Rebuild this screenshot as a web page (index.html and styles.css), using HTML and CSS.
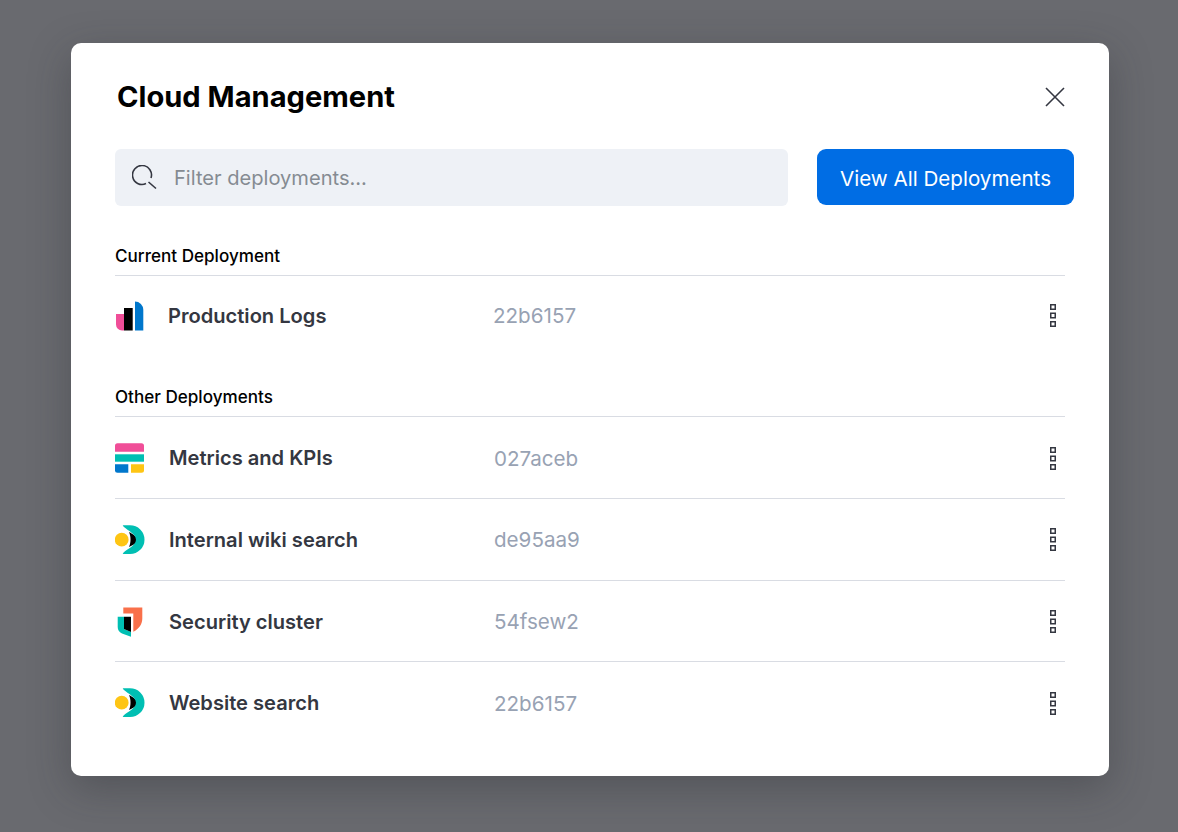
FILE: index.html

```html
<!DOCTYPE html>
<html lang="en">
<head>
    <meta charset="UTF-8">
    <title>Cloud Management</title>
    <link rel="stylesheet" href="styles.css">
</head>
<body>

<div class="modal">

    <!-- Header -->
    <div class="modal-header">
        <h1>Cloud Management</h1>
        <svg class="close-icon" width="22" height="22" viewBox="0 0 22 22">
            <path d="M2 2 L20 20 M20 2 L2 20" stroke="#343741" stroke-width="1.6" fill="none"/>
        </svg>
    </div>

    <!-- Search -->
    <div class="toolbar">
        <div class="search-box">
            <svg class="search-icon" width="26" height="26" viewBox="0 0 26 26">
                <path d="M14 18.600 A9.500 9.500 0 1 1 19 13" stroke="#343741" stroke-width="1.600" fill="none"/>
                <path d="M16.500 17 L24 23.500" stroke="#343741" stroke-width="1.600" fill="none"/>
            </svg>
            <span class="search-placeholder">Filter deployments...</span>
        </div>
        <button class="view-all">View All Deployments</button>
    </div>

    <!-- Current -->
    <div class="section-title">Current Deployment</div>
    <div class="row row-current">
        <svg class="app-icon" width="30" height="30" viewBox="0 0 30 30">
            <path d="M1 13 H9 V29.500 H7 A6 6 0 0 1 1 23.500 Z" fill="#f04e98"/>
            <rect x="9" y="7" width="8.700" height="22.500" fill="#000"/>
            <path d="M20 0.500 A8.300 8.300 0 0 1 28.300 8.800 V29.500 H20 Z" fill="#0077cc"/>
        </svg>
        <span class="row-name">Production Logs</span>
        <span class="row-id">22b6157</span>
        <svg class="more-icon" width="6" height="23" viewBox="0 0 6 23">
            <path d="M0.750 0.750 H5.250 V5.250 H0.750 Z M0.750 9.250 H5.250 V13.750 H0.750 Z M0.750 17.750 H5.250 V22.250 H0.750 Z" fill="none" stroke="#343741" stroke-width="1.500"/>
        </svg>
    </div>

    <!-- Other -->
    <div class="section-title section-other">Other Deployments</div>
    <div class="row">
        <svg class="app-icon" width="30" height="30" viewBox="0 0 30 30">
            <path d="M2.500 0.300 H26.500 A2.500 2.500 0 0 1 29 2.800 V8.700 H0 V2.800 A2.500 2.500 0 0 1 2.500 0.300 Z" fill="#f04e98"/>
            <rect x="0" y="11.300" width="29" height="7.400" fill="#00bfb3"/>
            <path d="M0 21.300 H13.300 V29.700 H2.500 A2.500 2.500 0 0 1 0 27.200 Z" fill="#0077cc"/>
            <path d="M16 21.300 H29 V27.200 A2.500 2.500 0 0 1 26.500 29.700 H16 Z" fill="#fec514"/>
        </svg>
        <span class="row-name">Metrics and KPIs</span>
        <span class="row-id">027aceb</span>
        <svg class="more-icon" width="6" height="23" viewBox="0 0 6 23">
            <path d="M0.750 0.750 H5.250 V5.250 H0.750 Z M0.750 9.250 H5.250 V13.750 H0.750 Z M0.750 17.750 H5.250 V22.250 H0.750 Z" fill="none" stroke="#343741" stroke-width="1.500"/>
        </svg>
    </div>
    <div class="row">
        <svg class="app-icon" width="30" height="30" viewBox="0 0 30 30">
            <path d="M14 7 C18 9 22 12 22 14.700 C22 18 18 20 14 22 C16 18 16 11 14 7 Z" fill="#000"/>
            <path d="M7.700 0.300 H15 A14.500 14.350 0 0 1 15 29 H7.700 C9 25 21 21.500 21 14.700 C21 8 9 4 7.700 0.300 Z" fill="#00bfb3"/>
            <circle cx="6.700" cy="14.700" r="6.900" fill="#fec514"/>
        </svg>
        <span class="row-name">Internal wiki search</span>
        <span class="row-id">de95aa9</span>
        <svg class="more-icon" width="6" height="23" viewBox="0 0 6 23">
            <path d="M0.750 0.750 H5.250 V5.250 H0.750 Z M0.750 9.250 H5.250 V13.750 H0.750 Z M0.750 17.750 H5.250 V22.250 H0.750 Z" fill="none" stroke="#343741" stroke-width="1.500"/>
        </svg>
    </div>
    <div class="row">
        <svg class="app-icon" width="30" height="30" viewBox="0 0 30 30">
            <path d="M8.300 0.500 H27.300 V11.500 C27.300 17 24 22 18.300 24.800 V6.500 H8.300 Z" fill="#f9704a"/>
            <path d="M2.700 9.800 H9 V22 L16 25 V29.800 L7 26.500 C4 25 2.700 23 2.700 20 Z" fill="#00bfb3"/>
            <path d="M9 9.800 H16 V25 L9 22 Z" fill="#000"/>
        </svg>
        <span class="row-name">Security cluster</span>
        <span class="row-id">54fsew2</span>
        <svg class="more-icon" width="6" height="23" viewBox="0 0 6 23">
            <path d="M0.750 0.750 H5.250 V5.250 H0.750 Z M0.750 9.250 H5.250 V13.750 H0.750 Z M0.750 17.750 H5.250 V22.250 H0.750 Z" fill="none" stroke="#343741" stroke-width="1.500"/>
        </svg>
    </div>
    <div class="row">
        <svg class="app-icon" width="30" height="30" viewBox="0 0 30 30">
            <path d="M14 7 C18 9 22 12 22 14.700 C22 18 18 20 14 22 C16 18 16 11 14 7 Z" fill="#000"/>
            <path d="M7.700 0.300 H15 A14.500 14.350 0 0 1 15 29 H7.700 C9 25 21 21.500 21 14.700 C21 8 9 4 7.700 0.300 Z" fill="#00bfb3"/>
            <circle cx="6.700" cy="14.700" r="6.900" fill="#fec514"/>
        </svg>
        <span class="row-name">Website search</span>
        <span class="row-id">22b6157</span>
        <svg class="more-icon" width="6" height="23" viewBox="0 0 6 23">
            <path d="M0.750 0.750 H5.250 V5.250 H0.750 Z M0.750 9.250 H5.250 V13.750 H0.750 Z M0.750 17.750 H5.250 V22.250 H0.750 Z" fill="none" stroke="#343741" stroke-width="1.500"/>
        </svg>
    </div>

</div>

</body>
</html>
```

FILE: styles.css

```css
html, body {
    height: 100%;
}
body {
    margin: 0;
    padding: 43px 69px 56px 71px;
    box-sizing: border-box;
    background-color: #696a6f;
    font-family: Inter, "Liberation Sans", sans-serif;
    overflow: hidden;
}
.modal {
    width: 1038px;
    height: 733px;
    box-sizing: border-box;
    padding: 0 44px;
    background: white;
    border-radius: 10px;
    box-shadow: 0 12px 40px rgba(40, 42, 50, 0.35);
}
.modal-header {
    display: flex;
    justify-content: space-between;
    align-items: center;
    height: 106px;
}
.modal-header h1 {
    margin: 0 0 0 2px;
    font-size: 29.100px;
    font-weight: 700;
    color: #000;
}
.close-icon {
    margin: 2px -1px 0 0;
}
.toolbar {
    display: flex;
    gap: 29px;
    width: 959px;
}
.search-box {
    display: flex;
    align-items: center;
    flex: 1;
    height: 57px;
    padding-left: 17px;
    background-color: #eef1f6;
    border-radius: 6px;
}
.search-icon {
    margin-right: 16px;
}
.search-placeholder {
    font-size: 20.100px;
    color: #858b92;
}
.view-all {
    width: 257px;
    height: 56px;
    padding: 2px 0 0;
    border: none;
    border-radius: 9px;
    background-color: #006de4;
    color: white;
    font-family: inherit;
    font-size: 20.600px;
    font-weight: 400;
}
.section-title {
    margin-top: 38px;
    height: 31px;
    font-size: 17.100px;
    font-weight: 500;
    line-height: 23px;
    color: #000;
    border-bottom: 1px solid #d9dce3;
}
.section-other {
    margin-top: 30px;
}
.row {
    display: flex;
    align-items: center;
    height: 79.400px;
    padding-top: 1.400px;
    border-bottom: 1px solid #d9dce3;
}
.row:last-child {
    border-bottom: none;
}
.row-current {
    height: 79px;
    padding-top: 0;
    border-bottom: none;
}
.row-current .app-icon {
    margin-right: 23px;
}
.app-icon {
    flex: none;
    margin-right: 24px;
}
.row-name {
    width: 325px;
    font-size: 20.100px;
    font-weight: 600;
    color: #343741;
}
.row-id {
    flex: 1;
    font-size: 20.600px;
    font-weight: 400;
    color: #98a2b3;
}
.more-icon {
    flex: none;
    margin-right: 9px;
}
```
